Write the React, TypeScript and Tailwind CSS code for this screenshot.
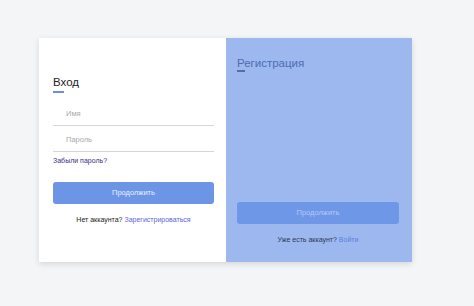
export default function App() {
  return (
    <div className="min-h-[306px] w-full bg-[#f4f5f7] pl-[39px] pt-[38px] font-['Liberation_Sans',Arial,sans-serif]">
      <div className="flex h-[224px] w-[373px] shadow-[0_2px_6px_rgba(0,0,0,0.13)]">
        {/* login */}
        <div className="flex w-[187px] flex-col bg-white pl-[14px] pr-[12px] pt-[38px]">
          <h2 className="text-[11.5px] leading-[13px] text-[#1d1d1f]">Вход</h2>
          <div className="mt-[1.5px] h-[2px] w-[11px] bg-[#6a8ee0]" />

          <div className="mt-[11px] flex h-[22px] items-center border-b border-[#d6d6d6] pl-[13px]">
            <span className="text-[7.5px] text-[#a9a9a9]">Имя</span>
          </div>
          <div className="mt-[4px] flex h-[22px] items-center border-b border-[#d6d6d6] pl-[13px]">
            <span className="text-[7.5px] text-[#a9a9a9]">Пароль</span>
          </div>

          <a className="mt-[4px] text-[7px] leading-[10px] text-[#3d2a86]">Забыли пароль?</a>

          <button className="mt-[16px] h-[22px] w-full rounded-[3px] bg-[#6d95e6] text-[7.5px] text-[#e8efff]">
            Продолжить
          </button>

          <p className="mt-[11px] text-center text-[7px] leading-[10px] text-[#222]">
            Нет аккаунта? <span className="text-[#5b63dc]">Зарегистрироваться</span>
          </p>
        </div>

        {/* register */}
        <div className="flex w-[186px] flex-col bg-[#9db8ee] pb-[17px] pl-[11px] pr-[13px] pt-[18.5px]">
          <h2 className="text-[11.5px] leading-[13px] text-[#4c6cb3]">Регистрация</h2>
          <div className="mt-[0.5px] h-[1.5px] w-[8px] bg-[#5a6e9e]" />

          <button className="mt-auto h-[22px] w-full rounded-[3px] bg-[#6e97e8] text-[7.5px] text-[#b3c9f4]">
            Продолжить
          </button>

          <p className="mt-[11px] text-center text-[7px] leading-[10px] text-[#2c3857]">
            Уже есть аккаунт? <span className="text-[#5b80e0]">Войти</span>
          </p>
        </div>
      </div>
    </div>
  );
}
